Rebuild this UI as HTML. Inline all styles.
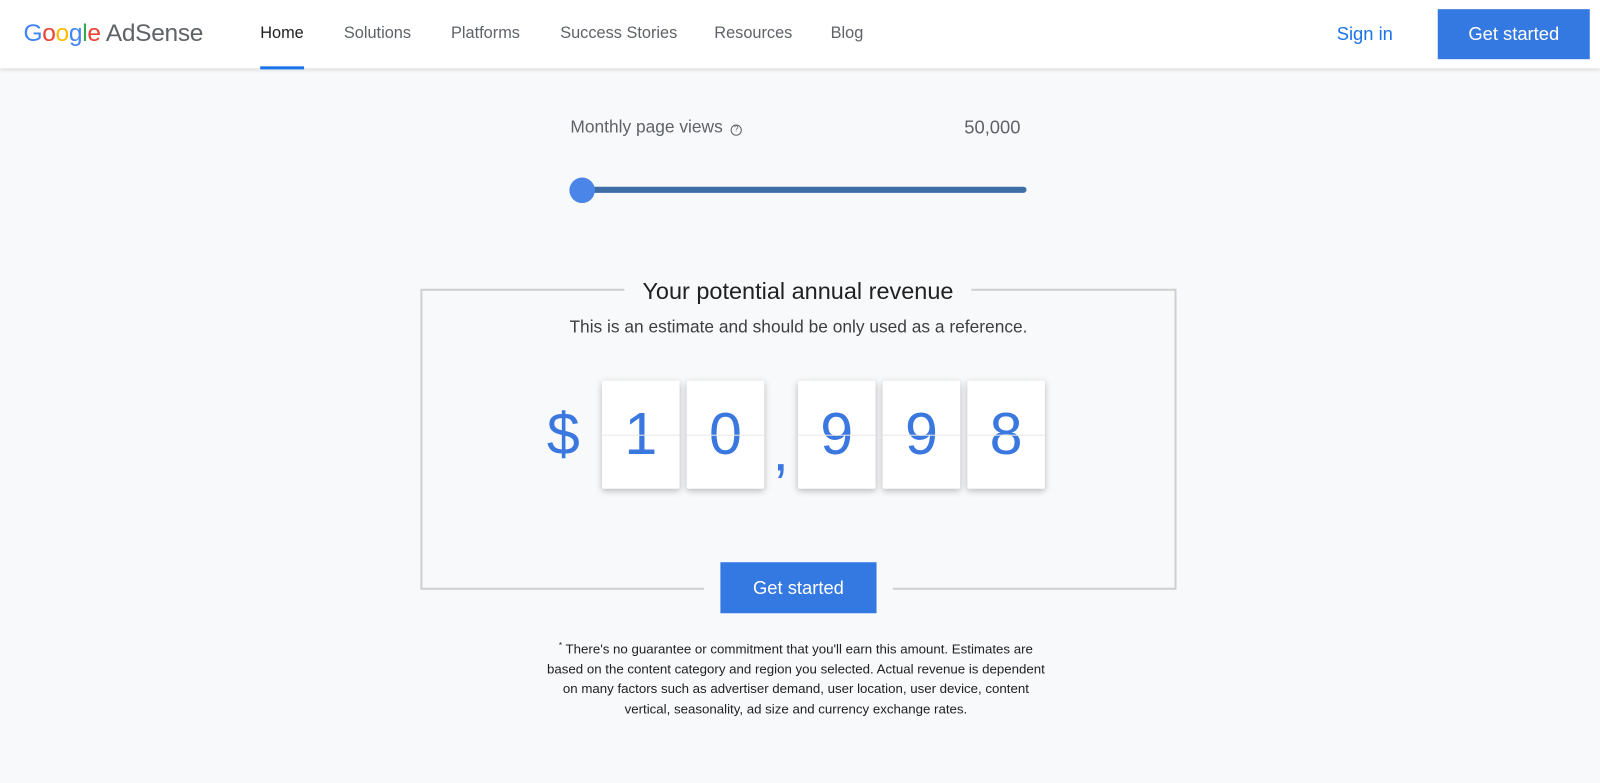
<!DOCTYPE html>
<html><head><meta charset="utf-8"><style>
*{margin:0;padding:0;box-sizing:border-box}
html,body{width:1600px;height:783px;overflow:hidden;background:#f8f9fa}
body{font-family:"Liberation Sans",Arial,sans-serif;position:relative}
#w{position:absolute;left:0;top:0;width:1568px;height:767px;transform:scale(1.0204);transform-origin:0 0}
.hdr{position:absolute;left:0;top:0;width:1568px;height:67px;background:#fff;box-shadow:0 1px 4px rgba(0,0,0,.15)}
.logo{position:absolute;left:23px;top:19px;font-size:24px;letter-spacing:-0.3px}
.nav{position:absolute;top:24px;font-size:16px;color:#5f6368}
.ul{position:absolute;left:255px;top:65px;width:43px;height:3px;background:#1a73e8}
.signin{position:absolute;left:1310px;top:23px;font-size:18px;color:#1a73e8}
.btn{position:absolute;background:#3478e2;color:#fff;text-align:center;font-size:18px}
.abs{position:absolute}
.card{position:absolute;top:373px;width:76px;height:106px;background:#fff;box-shadow:0 2px 6px rgba(0,0,0,.25);border-radius:2px;color:#3a78e0;font-size:58px;text-align:center;line-height:106px}
.card:after{content:"";position:absolute;left:0;right:0;top:53px;height:1px;background:#e8e8e8}
</style></head><body><div id="w">
<div class="hdr">
<div class="logo"><span style="color:#4285f4">G</span><span style="color:#ea4335">o</span><span style="color:#fbbc05">o</span><span style="color:#4285f4">g</span><span style="color:#34a853">l</span><span style="color:#ea4335">e</span> <span style="color:#5f6368">AdSense</span></div>
<div class="nav" style="left:255px;color:#202124">Home</div>
<div class="nav" style="left:337px">Solutions</div>
<div class="nav" style="left:442px">Platforms</div>
<div class="nav" style="left:549px">Success Stories</div>
<div class="nav" style="left:700px">Resources</div>
<div class="nav" style="left:814px">Blog</div>
<div class="ul"></div>
<div class="signin">Sign in</div>
<div class="btn" style="left:1409px;top:9px;width:149px;height:49px;line-height:49px">Get started</div>
</div>
<div class="abs" style="left:559px;top:115px;font-size:17px;color:#5f6368">Monthly page views <span style="display:inline-block;width:11px;height:11px;border:1.5px solid #5f6368;border-radius:50%;font-size:8px;line-height:8px;text-align:center;vertical-align:1px;margin-left:3px">?</span></div>
<div class="abs" style="left:945px;top:115px;font-size:18px;color:#5f6368">50,000</div>
<div class="abs" style="left:565px;top:183px;width:441px;height:6px;background:#3d6fa6;border-radius:3px"></div>
<div class="abs" style="left:558px;top:174px;width:25px;height:25px;background:#4c85e8;border-radius:50%"></div>
<div class="abs" style="left:412px;top:283px;width:741px;height:295px;border:2px solid #d0d0d0"></div>
<div class="abs" style="left:612px;top:270px;width:340px;height:30px;background:#f8f9fa;text-align:center;font-size:23px;color:#202124;line-height:30px">Your potential annual revenue</div>
<div class="abs" style="left:412px;top:311px;width:741px;text-align:center;font-size:17px;color:#3c4043">This is an estimate and should be only used as a reference.</div>
<div class="abs" style="left:536px;top:392px;font-size:58px;color:#3a78e0">$</div>
<div class="card" style="left:590px">1</div>
<div class="card" style="left:673px">0</div>
<div class="abs" style="left:757px;top:408px;font-size:58px;color:#3a78e0">,</div>
<div class="card" style="left:782px">9</div>
<div class="card" style="left:865px">9</div>
<div class="card" style="left:948px">8</div>
<div class="abs" style="left:690px;top:560px;width:185px;height:30px;background:#f8f9fa"></div>
<div class="btn" style="left:706px;top:551px;width:153px;height:50px;line-height:50px">Get started</div>
<div class="abs" style="left:530px;top:623px;width:500px;text-align:center;font-size:13px;line-height:19.5px;color:#202124"><sup style="font-size:8px">*</sup> There's no guarantee or commitment that you'll earn this amount. Estimates are<br>based on the content category and region you selected. Actual revenue is dependent<br>on many factors such as advertiser demand, user location, user device, content<br>vertical, seasonality, ad size and currency exchange rates.</div>
</div></body></html>
